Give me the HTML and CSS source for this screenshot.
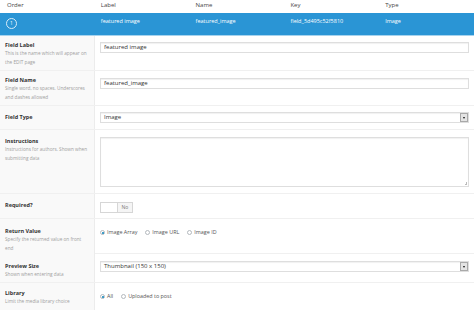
FILE: index.html
```html
<!DOCTYPE html>
<html lang="en">
    <head>
        <meta name="viewport" content="width=device-width, initial-scale=1.0">
        <title>Field settings</title>
        <link rel="stylesheet" href="styles.css">
    </head>
    <body>
        <div class="field">
            <div class="field__head">
                <div class="col col--order">Order</div>
                <div class="col">Label</div>
                <div class="col">Name</div>
                <div class="col">Key</div>
                <div class="col">Type</div>
            </div>
            <div class="field__meta">
                <div class="col col--order"><span class="order-badge">1</span></div>
                <div class="col">featured image</div>
                <div class="col">featured_image</div>
                <div class="col">field_5d495c52f5810</div>
                <div class="col">Image</div>
            </div>

            <div class="setting setting--label">
                <div class="setting__label">
                    <div class="setting__title">Field Label</div>
                    <div class="setting__desc">This is the name which will appear on the EDIT page</div>
                </div>
                <div class="setting__input">
                    <div class="text-input">featured image</div>
                </div>
            </div>

            <div class="setting setting--name">
                <div class="setting__label">
                    <div class="setting__title">Field Name</div>
                    <div class="setting__desc">Single word, no spaces. Underscores and dashes allowed</div>
                </div>
                <div class="setting__input">
                    <div class="text-input">featured_image</div>
                </div>
            </div>

            <div class="setting setting--type">
                <div class="setting__label">
                    <div class="setting__title">Field Type</div>
                </div>
                <div class="setting__input">
                    <div class="select-input">Image<span class="select-input__arrow"></span></div>
                </div>
            </div>

            <div class="setting setting--instructions">
                <div class="setting__label">
                    <div class="setting__title">Instructions</div>
                    <div class="setting__desc">Instructions for authors. Shown when submitting data</div>
                </div>
                <div class="setting__input">
                    <div class="textarea-input"><span class="textarea-input__grip"></span></div>
                </div>
            </div>

            <div class="setting setting--required">
                <div class="setting__label">
                    <div class="setting__title">Required?</div>
                </div>
                <div class="setting__input">
                    <div class="toggle"><span class="toggle__knob"></span><span class="toggle__text">No</span></div>
                </div>
            </div>

            <div class="setting setting--return">
                <div class="setting__label">
                    <div class="setting__title">Return Value</div>
                    <div class="setting__desc">Specify the returned value on front end</div>
                </div>
                <div class="setting__input">
                    <div class="radios">
                        <label class="radio is-checked"><span class="radio__dot"></span>Image Array</label>
                        <label class="radio"><span class="radio__dot"></span>Image URL</label>
                        <label class="radio"><span class="radio__dot"></span>Image ID</label>
                    </div>
                </div>
            </div>

            <div class="setting setting--preview">
                <div class="setting__label">
                    <div class="setting__title">Preview Size</div>
                    <div class="setting__desc">Shown when entering data</div>
                </div>
                <div class="setting__input">
                    <div class="select-input">Thumbnail (150 x 150)<span class="select-input__arrow"></span></div>
                </div>
            </div>

            <div class="setting setting--library">
                <div class="setting__label">
                    <div class="setting__title">Library</div>
                    <div class="setting__desc">Limit the media library choice</div>
                </div>
                <div class="setting__input">
                    <div class="radios">
                        <label class="radio is-checked"><span class="radio__dot"></span>All</label>
                        <label class="radio"><span class="radio__dot"></span>Uploaded to post</label>
                    </div>
                </div>
            </div>
        </div>
    </body>
</html>
```

FILE: styles.css
```css
body {
    margin: 0;
    background: #fff;
    font-family: "Open Sans", "Liberation Sans", sans-serif;
    color: #333;
}
.field__head,
.field__meta {
    display: flex;
}
.col {
    width: 20%;
    padding-left: 6px;
    box-sizing: border-box;
    white-space: nowrap;
}
.col--order {
    padding-left: 7px;
}
.field__head {
    height: 13px;
    font-size: 6px;
    line-height: 11px;
    color: #444;
}
.field__meta {
    background-color: #2a95d5;
    border-bottom: 1px solid #a6d3ee;
    color: #fff;
    font-size: 5.5px;
    line-height: 8px;
    padding-top: 4px;
    height: 18px;
}
.field__meta .col--order {
    padding-left: 6px;
    padding-top: 1px;
}
.order-badge {
    display: block;
    width: 9px;
    height: 9px;
    border: 1px solid #d8ecf8;
    border-radius: 50%;
    font-size: 5px;
    line-height: 9px;
    text-align: center;
}

.setting {
    display: grid;
    grid-template-columns: 95px 1fr;
    border-bottom: 1px solid #f0f0f0;
}
.setting__label {
    background-color: #f9f9f9;
    border-right: 1px solid #ececec;
    padding: 5px 5.5px 2px 5px;
}
.setting__title {
    font-size: 5.5px;
    font-weight: bold;
    line-height: 8px;
    color: #333;
}
.setting__desc {
    font-size: 4.7px;
    line-height: 9px;
    color: #a0a0a0;
}
.setting__input {
    padding: 6px 5px 0 5px;
}
.setting--label { height: 34px; }
.setting--name { height: 34px; }
.setting--name .setting__input { padding-top: 7px; }
.setting--type { height: 23px; }
.setting--type .setting__label { padding-top: 7px; }
.setting--instructions { height: 63px; }
.setting--instructions .setting__input { padding-top: 7px; }
.setting--instructions .setting__label { padding-top: 7px; }
.setting--required { height: 24px; }
.setting--required .setting__label { padding-top: 7px; }
.setting--required .setting__input { padding-top: 8px; }
.setting--return { height: 34px; }
.setting--return .setting__label { padding-top: 8px; }
.setting--return .setting__input { padding-top: 10px; }
.setting--preview { height: 28px; }
.setting--preview .setting__label { padding-top: 8px; }
.setting--preview .setting__input { padding-top: 7px; }
.setting--library { height: 30px; }
.setting--library .setting__label { padding-top: 6px; }
.setting--library .setting__input { padding-top: 10px; }

.text-input,
.select-input {
    position: relative;
    height: 11px;
    border: 1px solid #dedede;
    box-shadow: inset 0 1px 1px rgba(0, 0, 0, 0.06);
    box-sizing: border-box;
    padding-left: 3px;
    font-size: 6px;
    line-height: 9px;
    color: #333;
    background: #fff;
}
.select-input__arrow {
    position: absolute;
    right: 0;
    top: 0;
    width: 8px;
    height: 9px;
    background: #e4e4e4;
    border: 1px solid #a9a9a9;
    box-sizing: border-box;
}
.select-input__arrow::after {
    content: "";
    position: absolute;
    left: 2px;
    top: 3px;
    border-left: 1.5px solid transparent;
    border-right: 1.5px solid transparent;
    border-top: 2px solid #111;
}
.textarea-input {
    position: relative;
    height: 50px;
    border: 1px solid #dedede;
    box-shadow: inset 0 1px 1px rgba(0, 0, 0, 0.06);
    box-sizing: border-box;
    background: #fff;
}
.textarea-input__grip {
    position: absolute;
    right: 1px;
    bottom: 1px;
    width: 3px;
    height: 3px;
    background: linear-gradient(135deg, transparent 50%, #bbb 50%);
}

.toggle {
    display: flex;
    width: 33px;
    height: 11px;
    border: 1px solid #d6d6d6;
    box-sizing: border-box;
    background: #f5f5f5;
}
.toggle__knob {
    width: 16px;
    background: #fff;
    border-right: 1px solid #d6d6d6;
}
.toggle__text {
    flex: 1;
    text-align: center;
    font-size: 5px;
    line-height: 9px;
    color: #777;
}

.radios {
    display: flex;
    gap: 8px;
}
.radio {
    display: flex;
    align-items: center;
    gap: 2px;
    font-size: 5.4px;
    line-height: 7px;
    color: #555;
}
.radio__dot {
    width: 5px;
    height: 5px;
    border: 1px solid #b4b9be;
    border-radius: 50%;
    background: #fff;
    box-sizing: border-box;
    position: relative;
}
.radio.is-checked .radio__dot::after {
    content: "";
    position: absolute;
    left: 1px;
    top: 1px;
    width: 1.5px;
    height: 1.5px;
    border-radius: 50%;
    background: #1e8cbe;
}
```
